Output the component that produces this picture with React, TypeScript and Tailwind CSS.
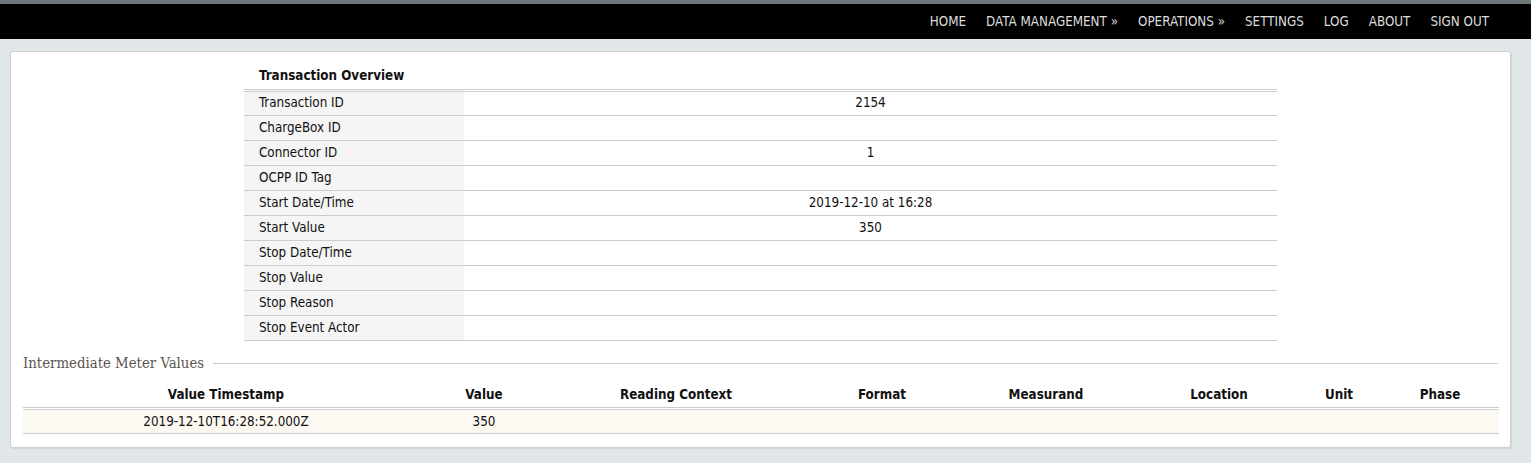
const NAV = ["HOME", "DATA MANAGEMENT »", "OPERATIONS »", "SETTINGS", "LOG", "ABOUT", "SIGN OUT"];

const OVERVIEW: [string, string][] = [
  ["Transaction ID", "2154"],
  ["ChargeBox ID", ""],
  ["Connector ID", "1"],
  ["OCPP ID Tag", ""],
  ["Start Date/Time", "2019-12-10 at 16:28"],
  ["Start Value", "350"],
  ["Stop Date/Time", ""],
  ["Stop Value", ""],
  ["Stop Reason", ""],
  ["Stop Event Actor", ""],
];

const COLS: [string, string][] = [
  ["Value Timestamp", "w-[406px]"],
  ["Value", "w-[110px]"],
  ["Reading Context", "w-[274px]"],
  ["Format", "w-[138px]"],
  ["Measurand", "w-[190px]"],
  ["Location", "w-[156px]"],
  ["Unit", "w-[84px]"],
  ["Phase", "w-[118px]"],
];

const ROW = ["2019-12-10T16:28:52.000Z", "350", "", "", "", "", "", ""];

const App = () => {
  return (
    <div className="min-h-[463px] bg-[#e1e6e9] font-['DejaVu_Sans_Condensed','DejaVu_Sans',sans-serif] font-stretch-condensed text-[13.3px] text-[#111]">
      <div className="h-1 bg-[#6e7779]" />
      <nav className="h-[35px] bg-black flex items-center justify-end pr-[42px] gap-5">
        {NAV.map((n) => (
          <a key={n} className="text-[#dcdcdc] text-[13.3px] leading-none">
            {n}
          </a>
        ))}
      </nav>
      <div className="pl-[10px] pr-[20px] pt-3">
        <div className="bg-white border border-[#d0d0d0] rounded-[3px] shadow-[1px_1px_1px_rgba(0,0,0,0.08)] pt-[12px] pb-[13px] px-3">
          <table className="w-[1033px] mx-auto border-collapse">
            <thead>
              <tr className="h-[26px] border-b-[3px] border-double border-[#cccccc]">
                <th colSpan={2} className="text-left font-bold pl-[15px]">
                  Transaction Overview
                </th>
              </tr>
            </thead>
            <tbody>
              {OVERVIEW.map(([k, v]) => (
                <tr key={k} className="h-[25px] border-b border-[#cccccc]">
                  <td className="w-[220px] bg-[#f5f5f5] pl-[15px]">{k}</td>
                  <td className="text-center">{v}</td>
                </tr>
              ))}
            </tbody>
          </table>

          <div className="flex items-center mt-[14px] h-[18px]">
            <span className="font-['DejaVu_Serif_Condensed','DejaVu_Serif',serif] text-[14.8px] text-[#5a5550] pr-[9px]">
              Intermediate Meter Values
            </span>
            <div className="flex-1 h-px bg-[#cccccc]" />
          </div>

          <table className="w-full border-collapse mt-[10px] table-fixed">
            <thead>
              <tr className="h-[26px] border-b-[3px] border-double border-[#cccccc]">
                {COLS.map(([c, w]) => (
                  <th key={c} className={`${w} text-center font-bold`}>
                    {c}
                  </th>
                ))}
              </tr>
            </thead>
            <tbody>
              <tr className="h-[25px] bg-[#fcf9f2] border-b border-[#cccccc]">
                {ROW.map((v, i) => (
                  <td key={i} className="text-center">
                    {v}
                  </td>
                ))}
              </tr>
            </tbody>
          </table>
        </div>
      </div>
    </div>
  );
};

export default App;
